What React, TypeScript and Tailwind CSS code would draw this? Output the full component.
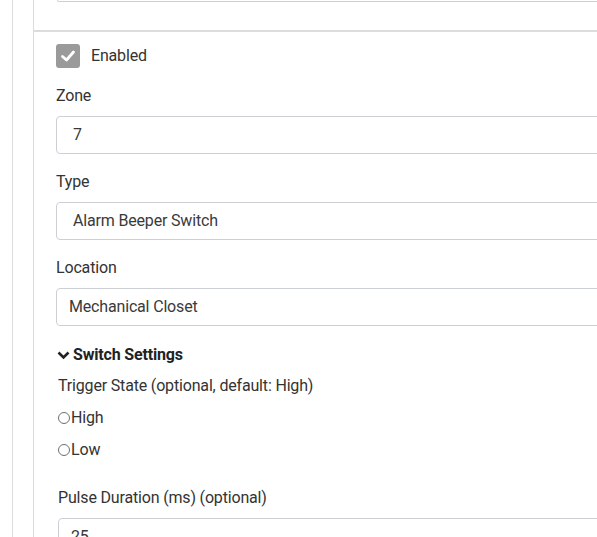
import React from "react";

const font = { fontFamily: "Roboto, 'Noto Sans', Arial, sans-serif", letterSpacing: "-0.17px" };

function Label({ children, className = "" }: { children: React.ReactNode; className?: string }) {
  return <div className={`h-6 leading-6 text-[16px] text-[#333] ${className}`}>{children}</div>;
}

function Field({ value, pad = "pl-4", className = "" }: { value: string; pad?: string; className?: string }) {
  return (
    <div
      className={`h-[38px] w-[640px] rounded-[4px] border border-[#ccd0d6] bg-white flex items-center ${pad} text-[16px] text-[#3a3a3a] ${className}`}
    >
      {value}
    </div>
  );
}

function Radio({ label }: { label: string }) {
  return (
    <div className="flex items-center h-6 text-[16px] text-[#333]">
      <span className="w-[12px] h-[12px] rounded-full border border-[#6f6f6f] mr-[1px]" />
      {label}
    </div>
  );
}

export default function App() {
  return (
    <div className="w-[597px] h-[537px] overflow-hidden bg-white" style={font}>
      <div className="ml-[12px] border-l border-[#dcdcdc] h-full">
        <div className="ml-[20px] border-l border-[#dcdcdc] h-full w-[700px]">
          {/* previous item (cut off) */}
          <div className="border-b-2 border-[#dcdcdc] h-[32px] pl-[23px]">
            <div className="h-[2px] w-[640px] border-x border-b border-[#ccd0d6] rounded-b-[4px]" />
          </div>

          <div className="pl-[22px] pt-[12px]">
            <div className="flex items-center h-6">
              <span className="w-6 h-6 rounded-[3px] bg-[#9a9a9a] flex items-center justify-center">
                <svg width="18" height="18" viewBox="0 0 18 18">
                  <polyline
                    points="3.5,9.5 7.5,13 14.5,5"
                    fill="none"
                    stroke="white"
                    strokeWidth="2.8"
                    strokeLinecap="round"
                    strokeLinejoin="round"
                  />
                </svg>
              </span>
              <span className="ml-[11px] text-[16px] text-[#333]">Enabled</span>
            </div>

            <Label className="mt-[16px]">Zone</Label>
            <Field value="7" className="mt-[8px]" />

            <Label className="mt-[16px]">Type</Label>
            <Field value="Alarm Beeper Switch" className="mt-[8px]" />

            <Label className="mt-[16px]">Location</Label>
            <Field value="Mechanical Closet" pad="pl-3" className="mt-[8px]" />

            <div className="mt-[17px] flex items-center h-6 ml-[1px]">
              <svg width="13" height="9" viewBox="0 0 13 9" className="mr-[3px]">
                <polyline
                  points="1.5,1.5 6.5,6.5 11.5,1.5"
                  fill="none"
                  stroke="#222"
                  strokeWidth="2.6"
                />
              </svg>
              <span className="text-[16px] font-bold text-[#222]">Switch Settings</span>
            </div>

            <div className="pl-[2px]">
              <Label className="mt-[7px]">Trigger State (optional, default: High)</Label>
              <div className="mt-[8px] flex flex-col gap-[8px]">
                <Radio label="High" />
                <Radio label="Low" />
              </div>
              <Label className="mt-[24px]">Pulse Duration (ms) (optional)</Label>
              <Field value="25" pad="pl-3" className="mt-[8px]" />
            </div>
          </div>
        </div>
      </div>
    </div>
  );
}
